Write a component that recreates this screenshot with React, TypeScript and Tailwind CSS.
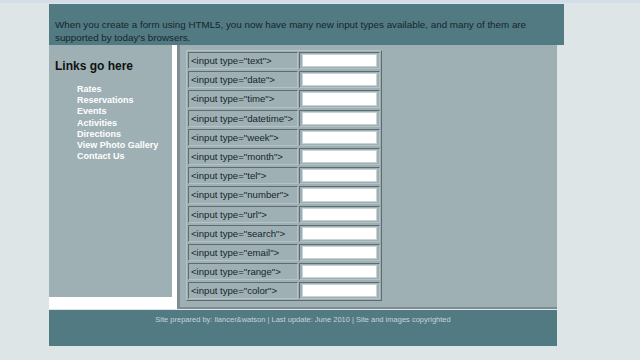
const types = [
  "text",
  "date",
  "time",
  "datetime",
  "week",
  "month",
  "tel",
  "number",
  "url",
  "search",
  "email",
  "range",
  "color",
];

const links = [
  "Rates",
  "Reservations",
  "Events",
  "Activities",
  "Directions",
  "View Photo Gallery",
  "Contact Us",
];

export default function App() {
  return (
    <div
      className="w-[640px] h-[360px] overflow-hidden bg-[#dde5e7] border-t-[3px] border-[#d3deea] pt-[1px] pl-[49px]"
      style={{ fontFamily: '"Liberation Sans", Arial, sans-serif' }}
    >
      <div className="w-[515px] h-[41px] bg-[#527a83] pl-[6px] pt-[14px] text-[9.8px] leading-[13px] text-[#15262b]">
        When you create a form using HTML5, you now have many new input types available, and many of them are
        <br />
        supported by today's browsers.
      </div>

      <div className="flex w-[508px] h-[264px]">
        <div className="w-[128px] bg-white flex flex-col">
          <div className="w-[123px] h-[252px] bg-[#9eb0b4] pl-[6px] pt-[12px]">
            <h2 className="text-[12px] font-bold text-[#111]">Links go here</h2>
            <ul className="mt-[9px] pl-[22px] text-[9px] leading-[11.2px] font-bold text-white">
              {links.map((l) => (
                <li key={l}>{l}</li>
              ))}
            </ul>
          </div>
        </div>

        <div className="flex-1 bg-[#9eb0b4] border-l-[3px] border-b-[2px] border-[#7d8d91] pl-[6px] pt-[5px]">
          <div className="w-[196px] border border-t-[#b5c3c6] border-l-[#b5c3c6] border-b-[#5d6c70] border-r-[#5d6c70] p-[1px] flex flex-col gap-[2px]">
            {types.map((t) => (
              <div key={t} className="flex gap-[1px] h-[17.2px]">
                <div className="w-[110px] border border-t-[#5d6c70] border-l-[#5d6c70] border-b-[#b5c3c6] border-r-[#b5c3c6] pl-[2px] text-[9.6px] leading-[15px] text-[#17252a] whitespace-nowrap">
                  {'<input type="' + t + '">'}
                </div>
                <div className="flex-1 border border-t-[#5d6c70] border-l-[#5d6c70] border-b-[#b5c3c6] border-r-[#b5c3c6] px-[2px] py-[1px]">
                  <div className="w-full h-full bg-white border border-[#c9d2d4]" />
                </div>
              </div>
            ))}
          </div>
        </div>
      </div>

      <div className="w-[508px] h-[36px] mt-[1px] bg-[#527a83] pt-[5px] text-center text-[7.5px] leading-[10px] text-[#c3d4d7]">
        Site prepared by: llancer&amp;watson | Last update: June 2010 | Site and images copyrighted
      </div>
    </div>
  );
}
